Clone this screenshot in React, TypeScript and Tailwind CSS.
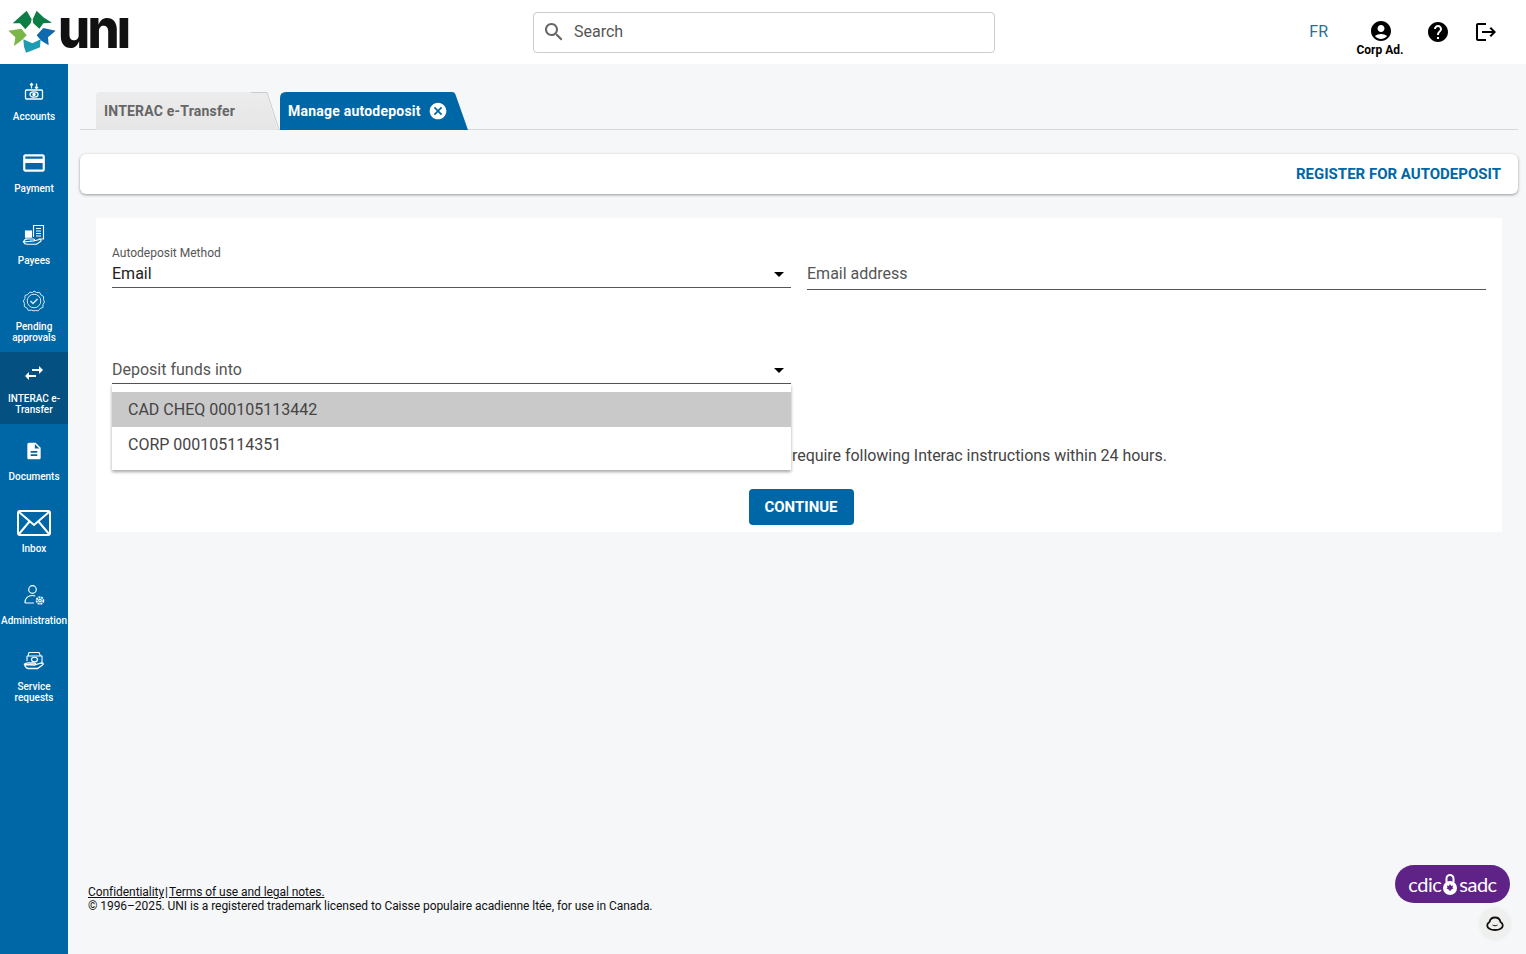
import React from "react";

const ACC = "M12 2C6.48 2 2 6.48 2 12s4.48 10 10 10 10-4.48 10-10S17.52 2 12 2zm0 4c1.93 0 3.5 1.57 3.5 3.5S13.93 13 12 13s-3.5-1.57-3.5-3.5S10.07 6 12 6zm0 14c-2.03 0-4.43-.82-6.14-2.88C7.55 15.8 9.68 15 12 15s4.45.8 6.14 2.12C16.43 19.18 14.03 20 12 20z";
const HELP = "M12 2C6.48 2 2 6.48 2 12s4.48 10 10 10 10-4.48 10-10S17.52 2 12 2zm1 17h-2v-2h2v2zm2.07-7.75l-.9.92C13.45 12.9 13 13.5 13 15h-2v-.5c0-1.1.45-2.1 1.17-2.83l1.24-1.26c.37-.36.59-.86.59-1.41 0-1.1-.9-2-2-2s-2 .9-2 2H8c0-2.21 1.79-4 4-4s4 1.79 4 4c0 .88-.36 1.68-.93 2.25z";
const LOGOUT = "M17 7l-1.41 1.41L18.17 11H8v2h10.17l-2.58 2.58L17 17l5-5zM4 5h8V3H4c-1.1 0-2 .9-2 2v14c0 1.1.9 2 2 2h8v-2H4V5z";
const SEARCH = "M15.5 14h-.79l-.28-.27C15.41 12.59 16 11.11 16 9.5 16 5.91 13.09 3 9.5 3S3 5.91 3 9.5 5.91 16 9.5 16c1.61 0 3.09-.59 4.23-1.57l.27.28v.79l5 4.99L20.49 19l-4.99-5zm-6 0C7.01 14 5 11.99 5 9.5S7.01 5 9.5 5 14 7.01 14 9.5 11.99 14 9.5 14z";
const CANCEL = "M12 2C6.47 2 2 6.47 2 12s4.47 10 10 10 10-4.47 10-10S17.53 2 12 2zm5 13.59L15.59 17 12 13.41 8.41 17 7 15.59 10.59 12 7 8.41 8.41 7 12 10.59 15.59 7 17 8.41 13.41 12 17 15.59z";

function Mui({ d, className }: { d: string; className?: string }) {
  return (
    <svg viewBox="0 0 24 24" className={className} fill="currentColor">
      <path d={d} />
    </svg>
  );
}

const AccountsIcon = () => (
  <svg viewBox="0 0 24 24" className="w-6 h-6" fill="none" stroke="white" strokeWidth="1.3">
    <rect x="3.500" y="11" width="17" height="9" rx="1" />
    <ellipse cx="12" cy="15.500" rx="4" ry="2.600" />
    <circle cx="12" cy="15.500" r="1.100" fill="white" />
    <path d="M9.500 9.500V4.500M8 6 9.500 4.500 11 6M14.500 4.500v5M13 8l1.500 1.500L16 8" />
  </svg>
);
const CardIcon = () => (
  <Mui d="M20 4H4c-1.11 0-1.99.89-1.99 2L2 18c0 1.11.89 2 2 2h16c1.11 0 2-.89 2-2V6c0-1.11-.89-2-2-2zm0 14H4v-6h16v6zm0-10H4V6h16v2z" className="w-[26px] h-[26px] text-white" />
);
const PayeesIcon = () => (
  <svg viewBox="0 0 24 24" className="w-6 h-6" fill="none" stroke="white" strokeWidth="1.1">
    <path d="M11.500 14V2.500h10V16h-5" />
    <path d="M14 5.500h5M14 8h5M14 10.500h5M14 13h5" />
    <rect x="3.500" y="8" width="6" height="2.600" fill="white" />
    <rect x="3.500" y="11.600" width="6" height="2.600" fill="white" />
    <path d="M1.500 19c1-3 3-3.500 5-3h5c1.500 0 1.500 2 0 2H8m3.500 0 6-1.500c1.500-.3 2.300 1 1 2l-4 2.800H5c-1.500 0-2.500 0-3.500-2.300z" />
  </svg>
);
const PendingIcon = () => (
  <svg viewBox="0 0 24 24" className="w-6 h-6" fill="none" stroke="#d8e8f2" strokeWidth="1">
    <path d="M12 2l2.600 1.500 3-.1 1.400 2.600 2.600 1.500-.1 3 1 2.500-1.500 2.500-.1 3-2.800 1-1.900 2.300-3-.4L12 22l-2.700-.900-3 .4-1.400-2.500-2.600-1.500.1-3L1.400 12l1.500-2.500.1-3 2.800-1L7.700 3.200l2.900.3z" />
    <circle cx="12" cy="12" r="6.800" />
    <path d="M8.500 12l2.500 2.500 4.500-4.500" strokeWidth="1.500" />
  </svg>
);
const SwapIcon = () => (
  <Mui d="M6.99 11L3 15l3.990 4v-3H14v-2H6.990v-3zM21 9l-3.990-4v3H10v2h7.010v3L21 9z" className="w-6 h-6 text-white" />
);
const DocIcon = () => (
  <Mui d="M14 2H6c-1.100 0-2 .9-2 2v16c0 1.100.9 2 2 2h12c1.100 0 2-.9 2-2V8l-6-6zm2 16H8v-2h8v2zm0-4H8v-2h8v2zm-3-5V3.500L18.500 9H13z" className="w-5 h-5 text-white" />
);
const InboxIcon = () => (
  <svg viewBox="0 0 34 26" className="w-[34px] h-[26px] shrink-0" fill="none" stroke="white" strokeWidth="2">
    <rect x="1" y="1" width="32" height="24" rx="2" />
    <path d="M2 2l15 13L32 2M2 24l10.500-12.500M32 24 21.500 11.500" />
  </svg>
);
const AdminIcon = () => (
  <svg viewBox="0 0 24 24" className="w-6 h-6" fill="none" stroke="white" strokeWidth="1.200">
    <circle cx="10.500" cy="6.500" r="3.800" />
    <path d="M3 20c0-5 3-7.500 7.500-7.500 1.200 0 2 .2 2.800.5M3 20h9" />
    <circle cx="18" cy="17.500" r="1.300" />
    <circle cx="18" cy="17.500" r="3.400" strokeWidth="1.800" strokeDasharray="2 0.800" />
  </svg>
);
const ServiceIcon = () => (
  <svg viewBox="0 0 24 24" className="w-6 h-6" fill="none" stroke="white" strokeWidth="1.100">
    <path d="M6 7l1-3.500h10L18.500 7" />
    <path d="M5 7h15v8" />
    <path d="M5 7v5" />
    <ellipse cx="12.500" cy="10.500" rx="3" ry="2.300" />
    <path d="M2.500 15.500c1.500-2 3-2 5-1.500h5c1.500 0 1.500 2 0 2H9m3.500 0 7-2c1.700-.3 2.300 1 1 2l-5 3.500H6.500c-2 0-3-1-4-4z" strokeWidth="1.300" />
  </svg>
);

const nav: { label: React.ReactNode; icon: React.ReactNode; active?: boolean }[] = [
  { label: "Accounts", icon: <AccountsIcon /> },
  { label: "Payment", icon: <CardIcon /> },
  { label: "Payees", icon: <PayeesIcon /> },
  { label: <>Pending<br />approvals</>, icon: <PendingIcon /> },
  { label: <>INTERAC e-<br />Transfer</>, icon: <SwapIcon />, active: true },
  { label: "Documents", icon: <DocIcon /> },
  { label: "Inbox", icon: <InboxIcon /> },
  { label: "Administration", icon: <AdminIcon /> },
  { label: <>Service<br />requests</>, icon: <ServiceIcon /> },
];

function Logo() {
  return (
    <div className="flex items-center">
      <svg viewBox="0 0 180 180" className="w-[60px] h-[60px] shrink-0 mt-[-4px]">
        <polygon fill="#0b7d45" points="80,32 95,58 92,70 76,88 60,70 38,70 58,52" />
        <polygon fill="#0b7d45" points="110,32 98,58 100,70 118,86 130,70 156,68 130,52" />
        <polygon fill="#7ab648" points="25,92 64,86 80,106 66,120 42,138 46,112" />
        <polygon fill="#0f69ae" points="167,92 130,84 110,106 124,122 146,136 144,112" />
        <polygon fill="#1d9cb4" points="70,118 97,130 122,118 120,142 100,150 78,158 72,140" />
      </svg>
      <span className="inline-block origin-left scale-x-[0.92] ml-[-2px] pr-2 font-['Inter',sans-serif] font-extrabold text-[55px] leading-[64px] text-[#111] tracking-[-3px] mt-[-9px]">unı</span>
    </div>
  );
}

function Chevron() {
  return <span className="w-0 h-0 border-x-[5px] border-x-transparent border-t-[5px] border-t-black" />;
}

export default function App() {
  return (
    <div className="h-[954px] w-[1526px] overflow-hidden flex flex-col bg-[#f5f7f9] font-['Roboto',sans-serif] text-black">
      <header className="h-16 shrink-0 bg-white relative flex items-center">
        <div className="w-[533px] shrink-0"><Logo /></div>
        <div className="w-[462px] h-[41px] border border-[#ccc] rounded flex items-center pl-2 text-[#555] bg-white">
          <Mui d={SEARCH} className="w-6 h-6 text-[#666]" />
          <span className="ml-2 text-[16px]">Search</span>
        </div>
        <div className="ml-auto flex items-center pr-[28px]">
          <span className="text-[16px] text-[#1f7396] mr-[23px]">FR</span>
          <div className="w-[60px] flex flex-col items-center mr-[15px] mt-[11px]">
            <Mui d={ACC} className="w-6 h-6 text-black" />
            <span className="text-[12px] font-bold leading-[14px] pr-[2px] whitespace-nowrap">Corp Ad.</span>
          </div>
          <Mui d={HELP} className="w-6 h-6 text-black mr-[24px]" />
          <Mui d={LOGOUT} className="w-6 h-6 text-black" />
        </div>
      </header>

      <div className="flex-1 flex min-h-0">
        <aside className="w-[68px] shrink-0 bg-[#0067a6] flex flex-col">
          {nav.map((n, i) => (
            <div
              key={i}
              className={`h-[72px] shrink-0 flex flex-col items-center justify-center text-white ${n.active ? "bg-[#045080]" : ""}`}
            >
              <div className="h-6 flex items-center justify-center">{n.icon}</div>
              <div className="mt-2 text-[10px] font-medium leading-[11px] text-center whitespace-nowrap">{n.label}</div>
            </div>
          ))}
        </aside>

        <main className="flex-1 min-w-0 flex flex-col pl-3 pr-2">
          <div className="mt-7 h-[38px] shrink-0 border-b border-[#d5d8da] flex pl-4">
            <div className="relative w-[184px] h-[38px] flex items-center pl-2">
              <svg viewBox="0 0 184 38" className="absolute inset-0 w-full h-full">
                <defs>
                  <linearGradient id="gt" x1="0" y1="0" x2="0" y2="1">
                    <stop offset="0" stopColor="#ececec" />
                    <stop offset="1" stopColor="#e6e6e6" />
                  </linearGradient>
                </defs>
                <path d="M0 38V4q0-4 4-4h166l12 38z" fill="url(#gt)" />
                <path d="M155 .5h16l12 37" fill="none" stroke="#c9cccf" strokeWidth="1" />
              </svg>
              <span className="relative text-[14px] font-bold text-[#666] tracking-[0.2px] whitespace-nowrap">INTERAC e-Transfer</span>
            </div>
            <div className="relative w-[189px] h-[38px] flex items-center pl-2 text-white">
              <svg viewBox="0 0 189 38" className="absolute inset-0 w-full h-full">
                <path d="M0 38V6q0-6 6-6h166q3 0 4 4l12 34z" fill="#0067a6" />
              </svg>
              <span className="relative text-[14px] font-bold tracking-[0.22px] whitespace-nowrap">Manage autodeposit</span>
              <Mui d={CANCEL} className="relative w-5 h-5 ml-[7px] text-white" />
            </div>
          </div>

          <div className="mt-6 h-10 shrink-0 bg-white rounded-md shadow-[0_1px_3px_rgba(0,0,0,0.4)] flex items-center justify-end pr-[17px]">
            <span className="text-[15px] font-bold text-[#0067a6]">REGISTER FOR AUTODEPOSIT</span>
          </div>

          <section className="mt-6 mx-4 h-[314px] shrink-0 bg-white px-4 pt-[27px] relative flex flex-col">
            <div className="grid grid-cols-2 gap-x-4 items-start">
              <div className="h-[43px] border-b border-[#555] flex flex-col pt-px">
                <span className="text-[12px] leading-[15px] text-[#555]">Autodeposit Method</span>
                <div className="flex items-center justify-between pr-[7px] mt-[3px]">
                  <span className="text-[16px] leading-[20px] text-[#222]">Email</span>
                  <span className="flex"><Chevron /></span>
                </div>
              </div>
              <div className="h-[45px] border-b border-[#555] flex items-end pb-[5px]">
                <span className="text-[16px] leading-[20px] text-[#555]">Email address</span>
              </div>
            </div>

            <div className="grid grid-cols-2 gap-x-4 mt-[52px]">
              <div className="relative h-[42px] border-b border-[#555] flex items-end justify-between pb-[3px] pr-[7px]">
                <span className="text-[16px] leading-[20px] text-[#555]">Deposit funds into</span>
                <span className="flex mb-[7px]"><Chevron /></span>
                <div className="absolute left-0 right-0 top-[42px] z-10 h-[86px] bg-white pt-2 shadow-[0_2px_3px_rgba(0,0,0,0.35)]">
                  <div className="h-[35px] bg-[#c9c9c9] flex items-center px-4 text-[16px] text-[#444]">CAD CHEQ 000105113442</div>
                  <div className="h-[35px] flex items-center px-4 text-[16px] text-[#444]">CORP 000105114351</div>
                </div>
              </div>
            </div>

            <p className="mt-[62px] pl-[680px] text-[16px] leading-5 text-[#444] tracking-[-0.04px] whitespace-nowrap">require following Interac instructions within 24 hours.</p>

            <div className="mt-[23px] flex justify-center pl-1">
              <button className="w-[105px] h-9 rounded bg-[#0067a6] text-white text-[15px] font-bold">CONTINUE</button>
            </div>
          </section>

          <footer className="mt-auto flex items-start justify-between pl-2 pr-[8px] h-[89px]">
            <div className="text-[12px] leading-[14px] text-[#111] pt-[20px] tracking-[-0.06px]">
              <div><span className="underline">Confidentiality</span><span className="mx-px">|</span><span className="underline">Terms of use and legal notes.</span></div>
              <div>© 1996–2025. UNI is a registered trademark licensed to Caisse populaire acadienne ltée, for use in Canada.</div>
            </div>
            <div className="flex flex-col items-end">
              <div className="w-[115px] h-[38px] rounded-[19px] bg-[#5f2387] flex items-center justify-center text-white font-['Lato',sans-serif] text-[20px] leading-none tracking-[-0.5px]">
                <span>cdic</span>
                <svg viewBox="0 0 18 24" className="w-[18px] h-[25px]">
                  <path d="M5.500 10V6a3.500 3.500 0 0 1 7 0v4" fill="none" stroke="white" strokeWidth="2" />
                  <circle cx="9" cy="15.500" r="7" fill="white" />
                  <path d="M9 11.500l1.200 2 2-.5-.7 2 1 1-2 .8-.500 1.200h-2l-.500-1.200-2-.8 1-1-.7-2 2 .5z" fill="#5f2387" />
                </svg>
                <span>sadc</span>
              </div>
              <div className="mt-[6px] w-[30px] h-[30px] rounded-full bg-[#efefee] shadow-[0_0_4px_rgba(0,0,0,0.08)] flex items-center justify-center">
                <svg viewBox="0 0 20 20" className="w-5 h-5" fill="none" stroke="#111" strokeWidth="1.800">
                  <path d="M10 3.500c3 0 5 2 5.500 4.500 1.500.8 2.300 2 2.300 3.500 0 2.500-3.300 4.500-7.800 4.500s-7.800-2-7.800-4.500c0-1.500.8-2.700 2.300-3.500C5 5.500 7 3.500 10 3.500z" />
                  <path d="M7.500 11c1.500 1 3.500 1 5 0" strokeWidth="1" />
                </svg>
              </div>
            </div>
          </footer>
        </main>
      </div>
    </div>
  );
}
